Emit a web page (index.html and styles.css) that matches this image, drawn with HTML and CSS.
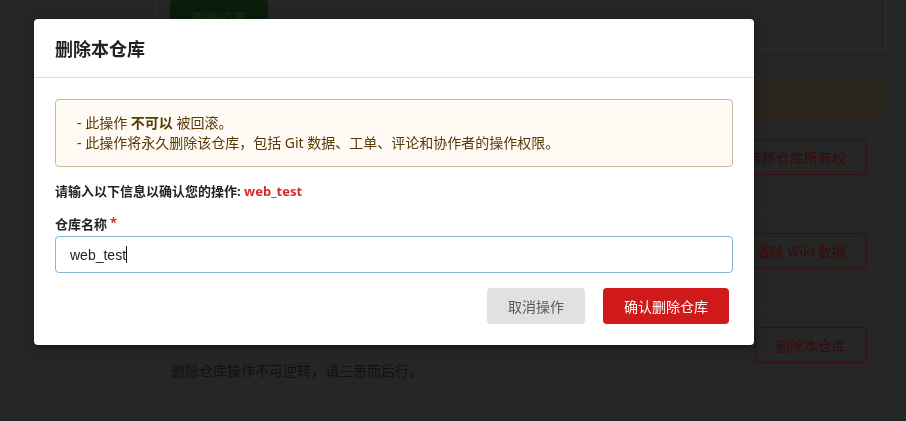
FILE: index.html
```html
<!DOCTYPE html>
<html lang="zh-CN">
<head>
<meta charset="utf-8">
<title>删除本仓库</title>
<link rel="stylesheet" href="styles.css">
</head>
<body>
<div class="page">
  <div class="panel top-panel">
    <button class="btn green">更新设置</button>
  </div>
  <div class="panel danger">
    <div class="danger-head"></div>
    <div class="row first">
      <div class="row-info"></div>
      <button class="btn basic-red">转移仓库所有权</button>
    </div>
    <div class="row">
      <div class="row-info"></div>
      <button class="btn basic-red">清除 Wiki 数据</button>
    </div>
    <div class="row last">
      <div class="row-info">
        <div class="row-desc">删除仓库操作不可逆转，请三思而后行。</div>
      </div>
      <button class="btn basic-red">删除本仓库</button>
    </div>
  </div>
</div>

<div class="dimmer">
  <div class="modal">
    <div class="modal-header">删除本仓库</div>
    <div class="modal-content">
      <div class="warning">
        - 此操作 <strong>不可以</strong> 被回滚。<br>
        - 此操作将永久删除该仓库，包括 Git 数据、工单、评论和协作者的操作权限。
      </div>
      <div class="confirm-text">请输入以下信息以确认您的操作: <span class="repo-name">web_test</span></div>
      <label class="field-label">仓库名称<span class="req">*</span></label>
      <div class="input"><span class="input-text">web_test</span><span class="caret"></span></div>
      <div class="actions">
        <button class="btn cancel">取消操作</button>
        <button class="btn confirm">确认删除仓库</button>
      </div>
    </div>
  </div>
</div>
</body>
</html>
```

FILE: styles.css
```css
* { box-sizing: border-box; }

html, body {
  margin: 0;
  padding: 0;
  width: 906px;
  height: 421px;
  overflow: hidden;
  background: #262626;
  font-family: "Noto Sans", "Noto Sans CJK SC", sans-serif;
  font-size: 14px;
}

.page {
  margin-left: 155px;
  width: 731px;
}

.panel {
  border: 1px solid #2f2f2f;
}

.top-panel {
  border-top: none;
  padding: 0 14px 13px 14px;
  height: 50px;
}

.btn {
  font-family: "Noto Sans CJK SC", "Noto Sans", sans-serif;
  font-size: 14px;
  line-height: 14px;
  padding: 11px 21px;
  border-radius: 4px;
  border: none;
  cursor: pointer;
  white-space: nowrap;
}

.btn.green {
  background: #0a1d0b;
  color: #1a301b;
  height: 36px;
}

.danger {
  margin-top: 28px;
  border-color: #33281c;
  border-radius: 4px;
}

.danger-head {
  height: 40px;
  background: #2a261f;
  border-bottom: 1px solid #302719;
}

.row {
  display: flex;
  justify-content: space-between;
  align-items: flex-start;
  padding: 21px 18px 0 15px;
  height: 94px;
  border-top: 1px solid #2c2c2c;
}

.row.first {
  border-top: none;
  padding-top: 20px;
  height: 92px;
}

.row.last {
  height: 93px;
}

.row-desc {
  color: #101010;
  line-height: 20px;
  margin-top: 33px;
  font-family: "Noto Sans CJK SC", sans-serif;
}

.btn.basic-red {
  background: transparent;
  border: 1px solid #380f11;
  color: #360b0c;
  padding: 10px 20px;
  height: 36px;
}

/* modal */
.dimmer {
  position: fixed;
  inset: 0;
  padding: 19px 0 0 34px;
}

.modal {
  width: 720px;
  background: #fff;
  border-radius: 4px;
  box-shadow: 1px 3px 3px 0 rgba(0,0,0,.2), 1px 3px 15px 2px rgba(0,0,0,.2);
}

.modal-header {
  padding: 17px 21px 16px;
  font-family: "Noto Sans CJK SC", sans-serif;
  font-size: 18px;
  line-height: 25px;
  font-weight: 700;
  color: #222;
  border-bottom: 1px solid #dedede;
}

.modal-content {
  padding: 21px;
}

.warning {
  background: #fffaf3;
  border: 1px solid #c9ba9b;
  border-radius: 4px;
  color: #573a08;
  padding: 13px 21px;
  line-height: 20px;
  font-size: 14px;
}

.warning strong {
  font-weight: 700;
}

.confirm-text {
  margin-top: 14px;
  font-size: 13px;
  line-height: 20px;
  font-weight: 700;
  color: #222;
}

.repo-name {
  color: #db2828;
  font-family: "Noto Sans", sans-serif;
}

.field-label {
  display: block;
  margin-top: 14px;
  margin-bottom: 3px;
  font-size: 13px;
  line-height: 18px;
  font-weight: 700;
  color: #222;
}

.req {
  color: #db2828;
  margin-left: 3px;
  position: relative;
  top: -2px;
}

.input {
  display: flex;
  align-items: center;
  height: 37px;
  border: 1px solid #85b7d9;
  border-radius: 4px;
  padding: 0 14px;
  font-family: "Liberation Sans", Arial, sans-serif;
  font-size: 14px;
  color: #222;
}

.caret {
  display: inline-block;
  width: 1px;
  height: 17px;
  background: #111;
}

.actions {
  display: flex;
  justify-content: flex-end;
  gap: 18px;
  margin-top: 15px;
  padding-right: 4px;
}

.btn.cancel {
  background: #e0e1e2;
  color: #5a5a5a;
  height: 36px;
}

.btn.confirm {
  background: #d01919;
  color: #fff;
  height: 36px;
}
```
